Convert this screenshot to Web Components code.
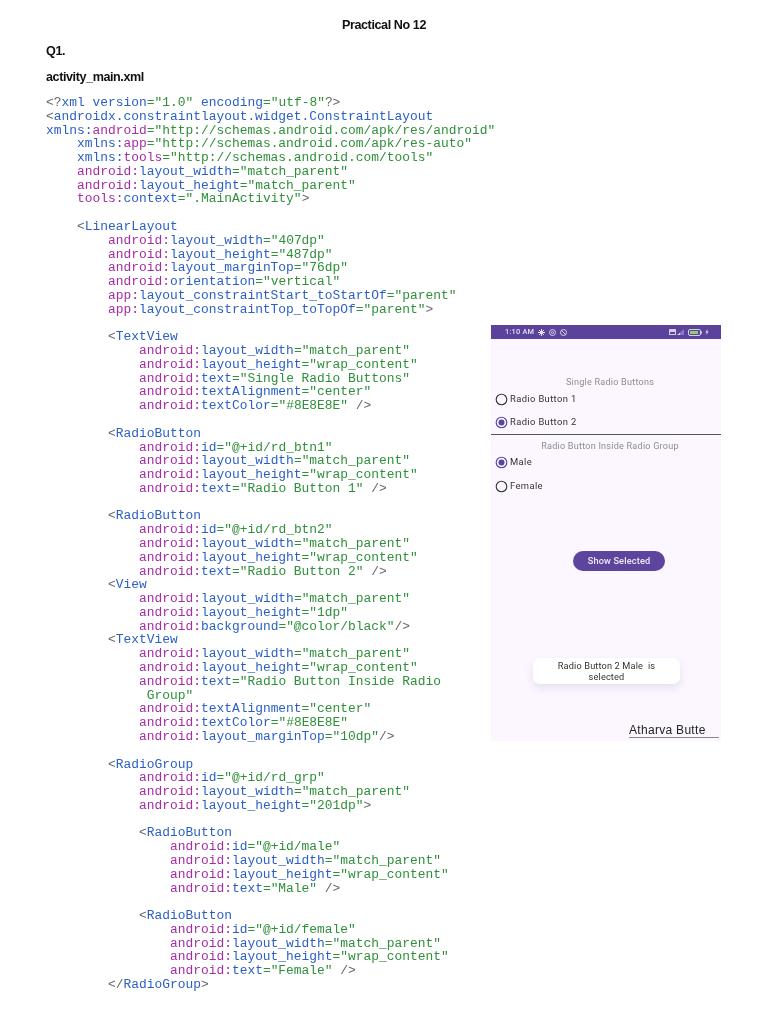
<!DOCTYPE html>
<html lang="en">
<head>
<meta charset="utf-8">
<title>Practical No 12</title>
<style>
  html, body { margin: 0; background: #fff; }
</style>
</head>
<body>
<practical-sheet>
  <sheet-heading slot="head" center>Practical No 12</sheet-heading>
  <sheet-heading slot="head">Q1.</sheet-heading>
  <sheet-heading slot="head">activity_main.xml</sheet-heading>
  <xml-listing slot="code"></xml-listing>
  <phone-shot slot="shot"></phone-shot>
</practical-sheet>

<script>
const LISTING = `<?xml version="1.0" encoding="utf-8"?>
<androidx.constraintlayout.widget.ConstraintLayout
xmlns:android="http://schemas.android.com/apk/res/android"
    xmlns:app="http://schemas.android.com/apk/res-auto"
    xmlns:tools="http://schemas.android.com/tools"
    android:layout_width="match_parent"
    android:layout_height="match_parent"
    tools:context=".MainActivity">

    <LinearLayout
        android:layout_width="407dp"
        android:layout_height="487dp"
        android:layout_marginTop="76dp"
        android:orientation="vertical"
        app:layout_constraintStart_toStartOf="parent"
        app:layout_constraintTop_toTopOf="parent">

        <TextView
            android:layout_width="match_parent"
            android:layout_height="wrap_content"
            android:text="Single Radio Buttons"
            android:textAlignment="center"
            android:textColor="#8E8E8E" />

        <RadioButton
            android:id="@+id/rd_btn1"
            android:layout_width="match_parent"
            android:layout_height="wrap_content"
            android:text="Radio Button 1" />

        <RadioButton
            android:id="@+id/rd_btn2"
            android:layout_width="match_parent"
            android:layout_height="wrap_content"
            android:text="Radio Button 2" />
        <View
            android:layout_width="match_parent"
            android:layout_height="1dp"
            android:background="@color/black"/>
        <TextView
            android:layout_width="match_parent"
            android:layout_height="wrap_content"
            android:text="Radio Button Inside Radio
             Group"
            android:textAlignment="center"
            android:textColor="#8E8E8E"
            android:layout_marginTop="10dp"/>

        <RadioGroup
            android:id="@+id/rd_grp"
            android:layout_width="match_parent"
            android:layout_height="201dp">

            <RadioButton
                android:id="@+id/male"
                android:layout_width="match_parent"
                android:layout_height="wrap_content"
                android:text="Male" />

            <RadioButton
                android:id="@+id/female"
                android:layout_width="match_parent"
                android:layout_height="wrap_content"
                android:text="Female" />
        </RadioGroup>`;

class PracticalSheet extends HTMLElement {
  constructor() {
    super();
    this.attachShadow({ mode: 'open' });
    this.shadowRoot.innerHTML = `
      <style>
        :host { display: block; height: 1024px; overflow: hidden; background: #fff; }
        header { display: flex; flex-direction: column; gap: 10px; padding: 17px 0 0 46px; height: 79px; }
        main { display: flex; padding-left: 46px; }
        .code { flex: 0 0 445px; min-width: 0; }
        .shot { flex: 0 0 230px; padding-top: 229px; }
      </style>
      <header><slot name="head"></slot></header>
      <main>
        <div class="code"><slot name="code"></slot></div>
        <div class="shot"><slot name="shot"></slot></div>
      </main>
    `;
  }
}

class SheetHeading extends HTMLElement {
  constructor() {
    super();
    this.attachShadow({ mode: 'open' });
    this.shadowRoot.innerHTML = `
      <style>
        :host {
          display: block;
          font: bold 12.6px/16px "Liberation Sans", Arial, sans-serif;
          letter-spacing: -.42px;
          color: #111;
          filter: blur(.25px);
        }
        :host([center]) { text-align: center; padding-right: 46px; }
      </style>
      <slot></slot>
    `;
  }
}

class XmlListing extends HTMLElement {
  constructor() {
    super();
    this.attachShadow({ mode: 'open' });
    this.shadowRoot.innerHTML = `
      <style>
        :host { display: block; filter: blur(.3px); }
        pre {
          margin: 0;
          font: 12.92px/13.78px "Liberation Mono", "Courier New", monospace;
          color: #2b5fc4;
        }
        .p { color: #666; }
        .s { color: #2f8f3a; }
        .n { color: #a62ca6; }
      </style>
      <pre></pre>
    `;
    this.shadowRoot.querySelector('pre').innerHTML = this.paint(LISTING);
  }

  // rough highlighter, just enough for this file
  paint(src) {
    const esc = t => t.replace(/&/g, '&amp;').replace(/</g, '&lt;').replace(/>/g, '&gt;');
    const re = /("[^"]*")|(<\?|<\/|<|\?>|\/>|>)|(=)|xmlns:(\w+)|\b(android|app|tools):/g;
    let out = '', last = 0, m;
    while ((m = re.exec(src))) {
      out += esc(src.slice(last, m.index));
      last = re.lastIndex;
      if (m[1]) out += `<span class="s">${esc(m[1])}</span>`;
      else if (m[2]) out += `<span class="p">${esc(m[2])}</span>`;
      else if (m[3]) out += `<span class="s">=</span>`;
      else if (m[4]) out += `xmlns:<span class="n">${m[4]}</span>`;
      else out += `<span class="n">${m[5]}:</span>`;
    }
    return out + esc(src.slice(last));
  }
}

class PhoneRadio extends HTMLElement {
  constructor() {
    super();
    this.attachShadow({ mode: 'open' });
    const on = this.hasAttribute('checked');
    this.shadowRoot.innerHTML = `
      <style>
        :host {
          display: flex; align-items: center; gap: 2.5px; height: 14px;
          padding-left: 3.5px;
          font: 400 9.4px/14px Roboto, sans-serif;
          letter-spacing: .38px;
          color: #333;
        }
        svg { width: 13px; height: 13px; flex: none; }
      </style>
      <svg viewBox="0 0 13 13">
        <circle cx="6.5" cy="6.5" r="5.3" fill="none" stroke="${on ? '#5b429b' : '#333'}" stroke-width="1.1"/>
        ${on ? '<circle cx="6.5" cy="6.5" r="3" fill="#5b429b"/>' : ''}
      </svg>
      <slot></slot>
    `;
  }
}

class PhoneShot extends HTMLElement {
  constructor() {
    super();
    this.attachShadow({ mode: 'open' });
    this.shadowRoot.innerHTML = `
      <style>
        :host {
          display: block; width: 230px; height: 416px;
          background: #fbf6ff;
          font-family: Roboto, sans-serif;
          filter: blur(.4px);
        }
        .status {
          display: flex; align-items: center; justify-content: space-between;
          height: 14px; padding: 0 12px 0 14px; background: #5b429b;
          color: #e6e0f2; font: 500 7.4px/14px Roboto, sans-serif; letter-spacing: .2px;
        }
        .status span, .status svg { display: block; }
        .left, .right { display: flex; align-items: center; gap: 4px; }
        .body { display: flex; flex-direction: column; height: 402px; }
        .cap { color: #8e8e8e; font: 9.1px/12px Roboto, sans-serif; letter-spacing: .22px; text-align: center; padding-left: 8px; }
        .first { margin-top: 37px; }
        .r1 { margin-top: 4px; }
        .r2 { margin-top: 9px; }
        .rule { height: 1px; background: #555; margin-top: 5px; flex: none; }
        .group { margin-top: 5px; }
        .r3 { margin-top: 3px; }
        .r4 { margin-top: 10px; }
        .btn {
          align-self: flex-start; margin: 58px 0 0 82px; width: 92px; height: 20px;
          border-radius: 10px; background: #5d449c; color: #efeaf7;
          font: 500 9.2px/20px Roboto, sans-serif; letter-spacing: .15px; text-align: center;
        }
        .toast {
          align-self: flex-start; margin: 87px 0 0 42px; width: 147px; height: 26px; box-sizing: border-box;
          padding-top: 3px;
          border-radius: 7px; background: #fff; color: #333;
          font: 9.2px/10.5px Roboto, sans-serif; letter-spacing: .15px; text-align: center;
          box-shadow: 0 4px 9px rgba(60,40,90,.1);
        }
        .sign {
          align-self: flex-end; box-sizing: border-box; width: 90px; margin: 39px 2px 0 0;
          color: #222; font: 12px/14px "Liberation Sans", sans-serif; letter-spacing: .3px;
          border-bottom: 1px solid #888;
        }
      </style>
      <div class="status">
        <div class="left">
          <span>1:10 AM</span>
          <svg width="7" height="7" viewBox="0 0 7 7" stroke="#e6e0f2" stroke-width="1"><path d="M3.5 0v7M0 3.5h7M1 1l5 5M6 1L1 6"/></svg>
          <svg width="7" height="7" viewBox="0 0 7 7" fill="none" stroke="#e6e0f2" stroke-width=".9"><circle cx="3.5" cy="3.5" r="3"/><circle cx="3.5" cy="3.5" r="1"/></svg>
          <svg width="7" height="7" viewBox="0 0 7 7" fill="none" stroke="#e6e0f2" stroke-width=".9"><circle cx="3.5" cy="3.5" r="3"/><path d="M1.5 1.5l4 4"/></svg>
        </div>
        <div class="right">
          <svg width="7" height="6" viewBox="0 0 7 6"><rect width="7" height="6" rx=".6" fill="#d5cfe6"/><rect x="1" y="3" width="5" height="2" fill="#5b429b"/></svg>
          <svg width="7" height="6" viewBox="0 0 7 6" style="margin-left:-3px"><path d="M0 6h7V0z" fill="#8d78bd"/><path d="M0 6h3V4z" fill="#e6e0f2"/></svg>
          <svg width="14" height="7" viewBox="0 0 14 7"><rect x=".5" y=".5" width="12" height="6" rx="1.5" fill="none" stroke="#d5cfe6"/><rect x="2" y="2" width="8" height="3" fill="#8fd06a"/><rect x="13" y="2.3" width="1" height="2.4" fill="#d5cfe6"/></svg>
          <svg width="4" height="6" viewBox="0 0 4 6" style="margin-left:-1px"><path d="M2.6 0L.4 3.4h1.4L1.2 6l2.4-3.6H2.2z" fill="#e6e0f2"/></svg>
        </div>
      </div>
      <div class="body">
        <div class="cap first">Single Radio Buttons</div>
        <phone-radio class="r1">Radio Button 1</phone-radio>
        <phone-radio class="r2" checked>Radio Button 2</phone-radio>
        <div class="rule"></div>
        <div class="cap group">Radio Button Inside Radio Group</div>
        <phone-radio class="r3" checked>Male</phone-radio>
        <phone-radio class="r4">Female</phone-radio>
        <div class="btn">Show Selected</div>
        <div class="toast">Radio Button 2 Male&nbsp; is<br>selected</div>
        <div class="sign">Atharva Butte</div>
      </div>
    `;
  }
}

customElements.define('sheet-heading', SheetHeading);
customElements.define('xml-listing', XmlListing);
customElements.define('phone-radio', PhoneRadio);
customElements.define('phone-shot', PhoneShot);
customElements.define('practical-sheet', PracticalSheet);
</script>
</body>
</html>
